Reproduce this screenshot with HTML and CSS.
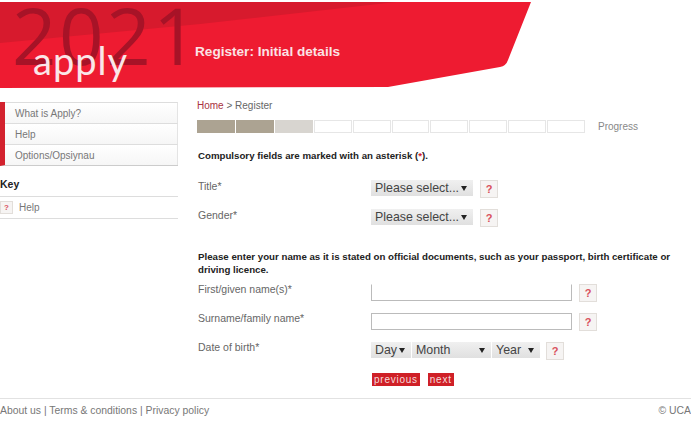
FILE: index.html

```html
<!DOCTYPE html>
<html lang="en">
<head>
  <meta charset="UTF-8" />
  <meta name="viewport" content="width=device-width, initial-scale=1.0"/>
  <title>Apply 2021 - Register</title>
  <link rel="stylesheet" href="styles.css">
</head>
<body>
  <header class="banner">
    <svg class="banner-shape" width="691" height="88" viewBox="0 0 691 88">
      <path d="M0 2H531L508 60Q506 66 500 67L388 87L0 88Z" fill="#ee1b31"/>
      <path d="M0 2H396L200 24L0 43Z" fill="#d71a2d"/>
    </svg>
    <span class="banner-year">2021</span>
    <span class="banner-apply">apply</span>
    <h1 class="banner-title">Register: Initial details</h1>
  </header>

  <div class="page">
    <aside class="sidebar">
      <nav class="side-nav">
        <a href="#">What is Apply?</a>
        <a href="#">Help</a>
        <a href="#">Options/Opsiynau</a>
      </nav>
      <h2 class="key-title">Key</h2>
      <div class="key-row"><span class="help help-small">?</span> Help</div>
    </aside>

    <main class="content">
      <p class="crumbs"><a href="#">Home</a> &gt; Register</p>

      <div class="progress">
        <div class="steps">
          <span class="step done"></span><span class="step done"></span><span class="step current"></span><span class="step"></span><span class="step"></span><span class="step"></span><span class="step"></span><span class="step"></span><span class="step"></span><span class="step"></span>
        </div>
        <span class="progress-label">Progress</span>
      </div>

      <p class="note">Compulsory fields are marked with an asterisk (<span class="star">*</span>).</p>

      <form>
        <div class="row">
          <label>Title*</label>
          <div class="controls">
            <div class="select-box w-please"><select><option>Please select...</option></select></div>
            <span class="help">?</span>
          </div>
        </div>
        <div class="row">
          <label>Gender*</label>
          <div class="controls">
            <div class="select-box w-please"><select><option>Please select...</option></select></div>
            <span class="help">?</span>
          </div>
        </div>

        <p class="note note-name">Please enter your name as it is stated on official documents, such as your passport, birth certificate or driving licence.</p>

        <div class="row row-first">
          <label>First/given name(s)*</label>
          <div class="controls controls-low">
            <input type="text" class="text-input no-top"/>
            <span class="help">?</span>
          </div>
        </div>
        <div class="row">
          <label>Surname/family name*</label>
          <div class="controls controls-low">
            <input type="text" class="text-input"/>
            <span class="help">?</span>
          </div>
        </div>
        <div class="row">
          <label>Date of birth*</label>
          <div class="controls controls-low controls-dob">
            <div class="dob">
              <div class="select-box w-day"><select><option>Day</option></select></div>
              <div class="select-box w-month"><select><option>Month</option></select></div>
              <div class="select-box w-year"><select><option>Year</option></select></div>
            </div>
            <span class="help">?</span>
          </div>
        </div>

        <div class="buttons">
          <button type="button">previous</button>
          <button type="button">next</button>
        </div>
      </form>
    </main>
  </div>

  <footer class="footer">
    <span><a href="#">About us</a> | <a href="#">Terms &amp; conditions</a> | <a href="#">Privacy policy</a></span>
    <span class="copyright">© UCA</span>
  </footer>
</body>
</html>
```

FILE: styles.css

```css
html, body {
  margin: 0;
  height: 422px;
  overflow: hidden;
}
body {
  font-family: "Liberation Sans", Arial, sans-serif;
  font-size: 10px;
  color: #666;
  background-color: #fff;
}
a {
  color: #666;
  text-decoration: none;
}

/* banner */
.banner {
  position: relative;
  height: 88px;
}
.banner-shape {
  position: absolute;
  top: 0;
  left: 0;
}
.banner-year {
  position: absolute;
  left: 12px;
  top: 0;
  font-family: "Open Sans", sans-serif;
  font-weight: 400;
  font-size: 78px;
  line-height: 71px;
  letter-spacing: 2.5px;
  color: #a71327;
}
.banner-apply {
  position: absolute;
  left: 33px;
  top: 40px;
  font-family: "Lato", sans-serif;
  font-weight: 400;
  font-size: 38px;
  line-height: 40px;
  letter-spacing: 1px;
  color: #fbe6e8;
}
.banner-title {
  position: absolute;
  left: 195px;
  top: 44px;
  margin: 0;
  font-size: 13.6px;
  line-height: 16px;
  font-weight: bold;
  color: #fbe3e5;
}

/* layout */
.page {
  display: flex;
  height: 310px;
}
.sidebar {
  width: 178px;
  padding-top: 14px;
  flex-shrink: 0;
}
.content {
  margin-left: 19px;
  width: 480px;
  padding-top: 11px;
}

/* sidebar */
.side-nav {
  border-left: 5px solid #d3222e;
  border-bottom: 1px solid #ccc;
}
.side-nav a {
  display: block;
  height: 20px;
  line-height: 22px;
  padding-left: 10px;
  border-top: 1px solid #ddd;
  border-right: 1px solid #e4e4e4;
  background: linear-gradient(to bottom, #fff, #f6f6f6);
  color: #777;
}
.key-title {
  margin: 12px 0 0;
  font-size: 10.5px;
  line-height: 13px;
  color: #222;
}
.key-row {
  display: flex;
  align-items: center;
  gap: 6px;
  height: 21px;
  margin-top: 5px;
  border-top: 1px solid #ddd;
  border-bottom: 1px solid #ddd;
  color: #777;
}

/* help button */
.help {
  display: block;
  width: 16px;
  height: 16px;
  line-height: 16px;
  border: 1px solid #e2deda;
  background-color: #f6f4f3;
  color: #d9505c;
  font-weight: bold;
  font-size: 11px;
  text-align: center;
  flex-shrink: 0;
}
.help-small {
  width: 11px;
  height: 11px;
  line-height: 11px;
  font-size: 8px;
}

/* main */
.crumbs {
  margin: 0;
  line-height: 13px;
}
.crumbs a {
  color: #a8323f;
}
.progress {
  display: flex;
  align-items: center;
  margin-top: 8px;
}
.steps {
  display: flex;
  width: 388px;
  height: 13px;
  gap: 1px;
}
.step {
  flex: 1;
  border: 1px solid #e6e6e6;
}
.step.done {
  background-color: #aca392;
  border-color: #aca392;
}
.step.current {
  background-color: #d8d5d0;
  border-color: #d8d5d0;
}
.progress-label {
  margin-left: 13px;
  color: #888;
}
.note {
  margin: 16px 0 0 1px;
  font-size: 9.7px;
  line-height: 13px;
  font-weight: bold;
  color: #222;
  width: 479px;
}
.star {
  color: #d3222e;
}
.note-name {
  margin-top: 12px;
}

/* form rows */
.row {
  display: grid;
  grid-template-columns: 174px 1fr;
  height: 29px;
}
.row label {
  padding-left: 1px;
  font-size: 10.5px;
  line-height: 13px;
}
form > .row:first-child {
  margin-top: 18px;
}
.row-first {
  margin-top: 7px;
}
.controls {
  display: flex;
  gap: 7px;
  align-items: flex-start;
}
.controls-low {
  padding-top: 1px;
}

/* selects */
.select-box {
  position: relative;
  height: 16px;
}
.select-box::after {
  content: "";
  position: absolute;
  right: 6px;
  top: 6px;
  border-left: 3px solid transparent;
  border-right: 3px solid transparent;
  border-top: 5px solid #222;
  pointer-events: none;
}
.select-box select {
  appearance: none;
  width: 100%;
  height: 16px;
  border: none;
  border-radius: 0;
  padding: 0 0 0 4px;
  background: linear-gradient(to bottom, #f0f0f0, #e0e0e0);
  font-family: "Liberation Sans", Arial, sans-serif;
  font-size: 12.4px;
  color: #444;
}
.w-please { width: 102px; }
.w-day { width: 40px; }
.w-month { width: 79px; }
.w-year { width: 48px; }
.dob {
  display: flex;
  gap: 1px;
}
.controls-dob {
  gap: 6px;
}

/* inputs */
.text-input {
  box-sizing: border-box;
  width: 201px;
  height: 17px;
  border: 1px solid #bbb;
  padding: 0 3px;
  background-color: #fff;
}
.no-top {
  border-top-color: transparent;
}

/* buttons */
.buttons {
  display: flex;
  gap: 8px;
  margin: 3px 0 0 175px;
}
.buttons button {
  height: 13px;
  padding: 0 2px;
  border: none;
  background-color: #cf2027;
  color: #f6dcdc;
  font-family: "Liberation Sans", Arial, sans-serif;
  font-size: 10px;
  line-height: 13px;
  letter-spacing: 0.75px;
}

/* footer */
.footer {
  display: flex;
  justify-content: space-between;
  height: 22px;
  border-top: 1px solid #e2e2e2;
  padding-top: 5px;
  font-size: 10.4px;
  line-height: 13px;
  white-space: nowrap;
  color: #777;
}
.footer a {
  color: #777;
}
```
